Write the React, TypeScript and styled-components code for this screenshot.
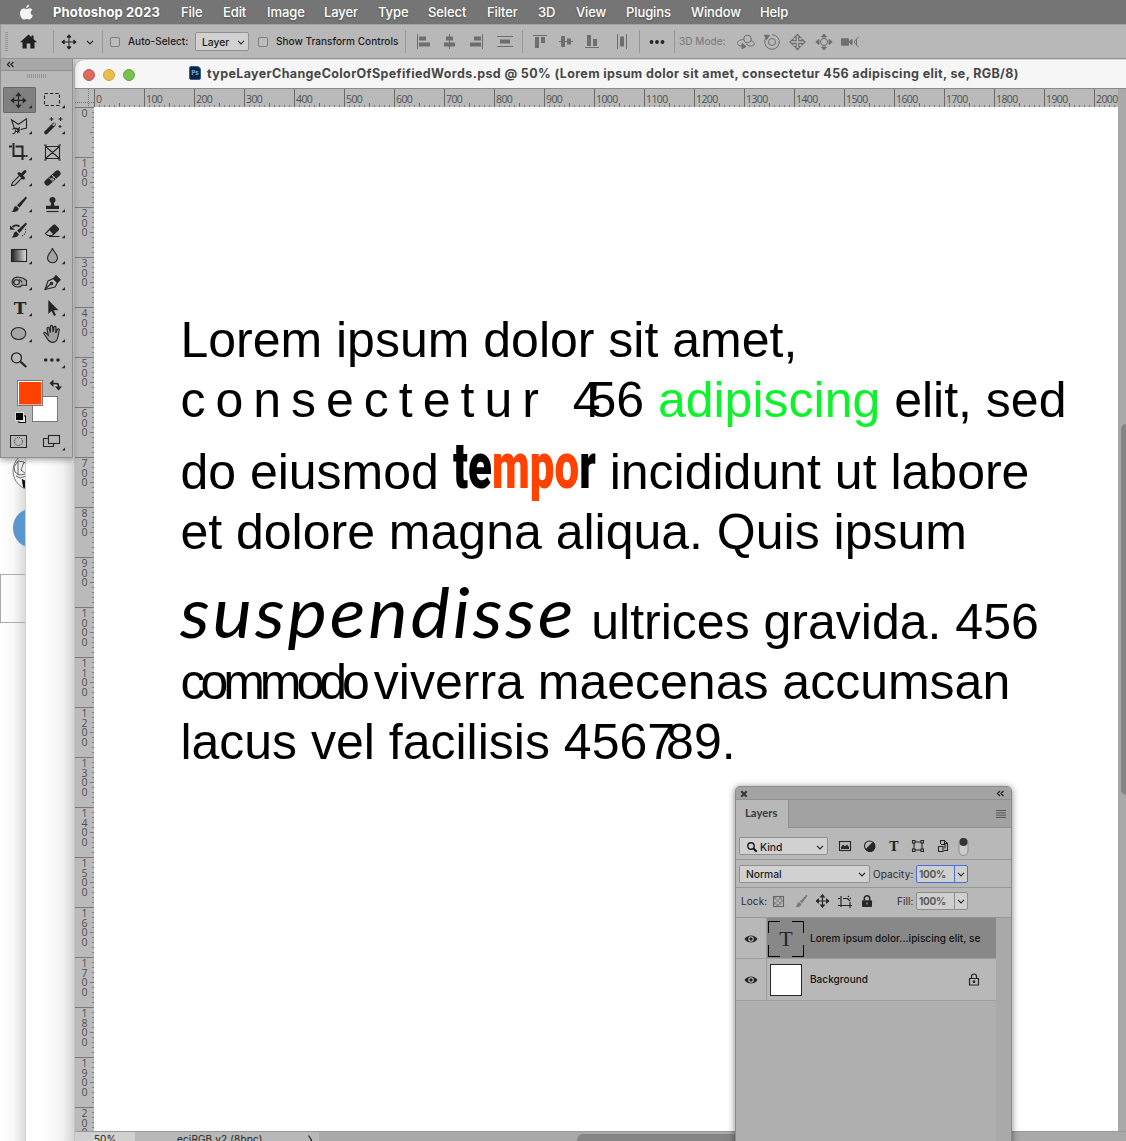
import React from "react";
import styled, { createGlobalStyle, css } from "styled-components";

const UI = `Inter, "Noto Sans", "Liberation Sans", sans-serif`;

const GlobalStyle = createGlobalStyle`
  * { box-sizing: border-box; }
  body { margin: 0; background: #fff; overflow: hidden; }
  svg { display: block; flex: none; }
`;

const Desktop = styled.div`
  width: 1126px;
  height: 1141px;
  display: flex;
  flex-direction: column;
  overflow: hidden;
  background: #fff;
  font-family: ${UI};
  color: #262626;
`;

/* ---------- menu bar ---------- */
const MenuBar = styled.nav`
  flex: none;
  height: 24px;
  display: flex;
  align-items: center;
  padding-left: 19px;
  background: #757575;
  color: #fff;
`;
const AppleSlot = styled.div`
  width: 34px;
`;
const MenuItem = styled.div<{ $w: number; $strong?: boolean }>`
  width: ${(p) => p.$w}px;
  font-size: 13px;
  line-height: 16px;
  font-weight: ${(p) => (p.$strong ? 700 : 500)};
  letter-spacing: ${(p) => (p.$strong ? 0.13 : -0.1)}px;
  white-space: nowrap;
  text-shadow: 0 1px 2px rgba(0, 0, 0, 0.35);
`;

/* ---------- options bar ---------- */
const OptionsBar = styled.div`
  flex: none;
  height: 35px;
  display: flex;
  align-items: center;
  background: #b8b8b8;
  border-top: 1px solid #a2a2a2;
  border-bottom: 1px solid #939393;
  border-left: 1px solid #999;
`;
const Slot = styled.div<{ $w: number }>`
  flex: none;
  width: ${(p) => p.$w}px;
  display: flex;
  align-items: center;
`;
const Grip = styled.div`
  width: 3px;
  height: 20px;
  margin-left: 4px;
  background: repeating-linear-gradient(to bottom, #959595 0 1px, transparent 1px 2px);
`;
const Divider = styled.div`
  flex: none;
  width: 1px;
  height: 23px;
  background: #969696;
`;
const OptionText = styled.div<{ $w: number; $muted?: boolean }>`
  flex: none;
  width: ${(p) => p.$w}px;
  margin-top: -1px;
  font-size: 10px;
  line-height: 14px;
  font-weight: 450;
  letter-spacing: 0.03px;
  white-space: nowrap;
  color: ${(p) => (p.$muted ? "#7f7f7f" : "#1a1a1a")};
`;
const CheckBox = styled.span`
  width: 10px;
  height: 10px;
  border: 1px solid #7e7e7e;
  border-radius: 2px;
  background: #bdbdbd;
`;
const Select = styled.div<{ $w: number; $h: number }>`
  flex: none;
  width: ${(p) => p.$w}px;
  height: ${(p) => p.$h}px;
  display: flex;
  align-items: center;
  gap: 3px;
  justify-content: space-between;
  padding: 1px 3px 0 6px;
  border: 1px solid #909090;
  border-radius: 2px;
  background: #d1d1d1;
  font-size: 10.3px;
  font-weight: 450;
  color: #1a1a1a;
`;

/* ---------- work area ---------- */
const Workspace = styled.main`
  flex: 1;
  position: relative;
  overflow: hidden;
  background: linear-gradient(to right, #fff 0 40px, #f3f3f3 62px, #d2d2d2 75px);
`;
const BackPage = styled.div`
  position: absolute;
  left: 0;
  top: 390px;
  width: 26px;
  bottom: 0;
  overflow: hidden;
  background: linear-gradient(to right, #fff, #f8f8f8 55%, #dcdcdc);
  border-right: 1px solid #cfcfcf;
`;
const BackStack = styled.div`
  display: flex;
  flex-direction: column;
  width: 60px;
`;
const BlueDot = styled.div`
  width: 40px;
  height: 40px;
  margin: 17px 0 0 13px;
  border-radius: 50%;
  background: #5b97cf;
`;
const OutlineBox = styled.div`
  height: 49px;
  margin-top: 26px;
  border: 1px solid #aaa;
`;

/* ---------- document window ---------- */
const DocWindow = styled.section`
  position: absolute;
  left: 75px;
  top: 1px;
  right: 0;
  bottom: 0;
  display: flex;
  flex-direction: column;
  border-top-left-radius: 9px;
  overflow: hidden;
  background: #a9a9a9;
  box-shadow: -1px 0 0 #c2c2c2;
`;
const TitleBar = styled.header`
  flex: none;
  height: 28px;
  display: flex;
  align-items: center;
  padding-left: 8px;
  background: #f6f6f6;
`;
const Lights = styled.div`
  width: 106px;
  display: flex;
  gap: 8px;
  padding-top: 2px;
`;
const Light = styled.span<{ $c: string; $b: string }>`
  width: 12px;
  height: 12px;
  border-radius: 50%;
  background: ${(p) => p.$c};
  border: 1px solid ${(p) => p.$b};
`;
const PsBadge = styled.span`
  width: 12px;
  height: 14px;
  margin: -3px 6px 0 0;
  border-radius: 2px 4px 2px 2px;
  background: #0d2440;
  border: 1px solid #2d5f9c;
  color: #6db4ff;
  font-size: 6px;
  line-height: 11px;
  font-weight: 700;
  text-align: center;
`;
const DocTitle = styled.h1`
  margin: 0;
  font-size: 12.5px;
  line-height: 16px;
  font-weight: 700;
  letter-spacing: 0.374px;
  white-space: nowrap;
  color: #464646;
`;

const DocBody = styled.div`
  flex: 1;
  min-height: 0;
  display: grid;
  grid-template-columns: 19px 1024px 8px;
  grid-template-rows: 19px 1024px 1fr;
`;
const RulerCorner = styled.div`
  border-top: 1px solid #8a8a8a;
  background:
    repeating-linear-gradient(to right, #777 0 1px, transparent 1px 2px) 0 13px / 19px 1px no-repeat,
    repeating-linear-gradient(to bottom, #777 0 1px, transparent 1px 2px) 13px 0 / 1px 19px no-repeat,
    #bababa;
`;
const HRuler = styled.div`
  display: flex;
  overflow: hidden;
  border-top: 1px solid #8a8a8a;
  background: #bababa;
`;
const HSegment = styled.div`
  flex: none;
  width: 50px;
  height: 18px;
  padding: 3px 0 0 2px;
  font-family: "Open Sans", "Noto Sans", sans-serif;
  font-size: 10.5px;
  line-height: 14px;
  letter-spacing: -0.6px;
  color: #505050;
  background:
    linear-gradient(#6b6b6b, #6b6b6b) 0 0 / 1px 18px no-repeat,
    linear-gradient(#6b6b6b, #6b6b6b) 25px 14px / 1px 4px no-repeat,
    repeating-linear-gradient(to right, #777 0 1px, transparent 1px 5px) 0 16px / 50px 2px no-repeat;
`;
const VRuler = styled.div`
  display: flex;
  flex-direction: column;
  overflow: hidden;
  background: #bababa;
`;
const VSegment = styled.div`
  flex: none;
  width: 19px;
  height: 50px;
  display: flex;
  flex-direction: column;
  align-items: center;
  padding-top: 2px;
  font-family: "Open Sans", "Noto Sans", sans-serif;
  font-size: 10.5px;
  line-height: 9.6px;
  color: #505050;
  background:
    linear-gradient(#7a7a7a, #7a7a7a) 0 0 / 19px 1px no-repeat,
    linear-gradient(#7a7a7a, #7a7a7a) 15px 25px / 4px 1px no-repeat,
    repeating-linear-gradient(to bottom, #7a7a7a 0 1px, transparent 1px 5px) 17px 0 / 2px 50px no-repeat;
`;
const VScroll = styled.div`
  padding-top: 317px;
  background: #a9a9a9;
  overflow: hidden;
`;
const VThumb = styled.div`
  width: 10px;
  height: 371px;
  margin-left: 3px;
  border-radius: 5px;
  background: #858585;
`;
const HeaderFiller = styled.div`
  border-top: 1px solid #8a8a8a;
  background: #a9a9a9;
`;
const StatusBar = styled.footer`
  grid-column: 1 / 4;
  display: flex;
  overflow: hidden;
  border-top: 1px solid #999;
  background: #a9a9a9;
  font-size: 10px;
  line-height: 15px;
  color: #222;
`;
const ZoomField = styled.div`
  width: 60px;
  height: 20px;
  padding-left: 19px;
  background: #d0d0d0;
`;
const ProfileField = styled.div`
  width: 184px;
  height: 20px;
  display: flex;
  justify-content: space-between;
  padding: 0 6px 0 42px;
  letter-spacing: 0.15px;
  background: #b8b8b8;
`;
const HThumb = styled.div`
  width: 420px;
  height: 12px;
  margin: 2px 0 0 258px;
  border-radius: 6px;
  background: #858585;
`;

/* ---------- artwork text ---------- */
const Artboard = styled.article`
  background: #fff;
  padding: 203px 0 0 86.4px;
  font-family: "Liberation Sans", Arial, sans-serif;
  font-size: 50px;
  color: #000;
`;
const TextLine = styled.p<{ $h: number }>`
  margin: 0;
  height: ${(p) => p.$h}px;
  display: flex;
  align-items: flex-end;
  line-height: 60px;
  white-space: pre;
`;
const Tracked = styled.span<{ $ls: number }>`
  letter-spacing: ${(p) => p.$ls}px;
`;
const Green = styled.span`
  color: #0cf22b;
`;
const Condensed = styled.span`
  width: 143px;
  margin-bottom: 6px;
  font-family: Roboto, sans-serif;
  font-weight: 900;
  font-size: 65px;
  transform: scaleX(0.675);
  transform-origin: 0 0;
`;
const Orange = styled.span`
  color: #ff4200;
`;
const Script = styled.span`
  width: 397px;
  margin-bottom: 10px;
  font-family: Lato, sans-serif;
  font-style: italic;
  font-size: 69px;
  letter-spacing: 2.6px;
  transform: scaleX(1.08);
  transform-origin: 0 0;
`;

/* ---------- tools palette ---------- */
const Palette = styled.aside`
  position: absolute;
  left: 0;
  top: 0;
  width: 73px;
  height: 399px;
  display: flex;
  flex-direction: column;
  background: #b8b8b8;
  border: 1px solid #8f8f8f;
  border-top: 0;
  box-shadow: 0 2px 6px rgba(0, 0, 0, 0.35);
`;
const PaletteHead = styled.div`
  height: 12px;
  padding: 2px 0 0 5px;
  background: #a8a8a8;
  border-bottom: 1px solid #8f8f8f;
`;
const PaletteGrip = styled.div`
  width: 20px;
  height: 4px;
  margin: 3px 0 9px 26px;
  background: repeating-linear-gradient(to right, #959595 0 1px, transparent 1px 2px);
`;
const ToolGrid = styled.div`
  display: grid;
  grid-template-columns: 33px 33px;
  grid-auto-rows: 26px;
  padding-left: 2px;
`;
const ToolButton = styled.div<{ $on?: boolean }>`
  ${(p) =>
    p.$on &&
    css`
      background: #808080;
      box-shadow: inset 0 0 0 1px #686868;
      border-radius: 2px;
    `}
`;
const PaletteFoot = styled.div`
  height: 84px;
`;

/* ---------- layers panel ---------- */
const Panel = styled.aside`
  position: absolute;
  left: 735px;
  top: 727px;
  width: 277px;
  height: 430px;
  display: flex;
  flex-direction: column;
  border: 1px solid #8b8b8b;
  border-radius: 5px 5px 0 0;
  background: #b8b8b8;
  box-shadow: 0 1px 7px rgba(0, 0, 0, 0.5);
  overflow: hidden;
`;
const PanelHead = styled.div`
  flex: none;
  height: 13px;
  display: flex;
  align-items: center;
  justify-content: space-between;
  padding: 1px 6px 0 4px;
  background: #a3a3a3;
  border-bottom: 1px solid #8f8f8f;
`;
const TabRow = styled.div`
  flex: none;
  height: 28px;
  display: flex;
  justify-content: space-between;
  background: #a2a2a2;
`;
const Tab = styled.div`
  width: 53px;
  padding: 6px 0 0 9px;
  font-family: Lato, "Noto Sans", sans-serif;
  font-size: 11.3px;
  line-height: 14px;
  font-weight: 700;
  color: #3b3b3b;
  background: #b8b8b8;
  border-right: 1px solid #929292;
`;
const TabRest = styled.div`
  flex: 1;
  display: flex;
  justify-content: flex-end;
  align-items: center;
  padding-right: 5px;
  border-bottom: 1px solid #929292;
`;
const PanelRow = styled.div<{ $h: number; $top?: number; $bottom?: number }>`
  flex: none;
  height: ${(p) => p.$h}px;
  display: flex;
  align-items: center;
  padding: ${(p) => p.$top ?? 0}px 0 ${(p) => p.$bottom ?? 0}px 3px;
  border-bottom: 1px solid #979797;
`;
const PanelLabel = styled.div<{ $w: number }>`
  flex: none;
  width: ${(p) => p.$w}px;
  font-size: 10px;
  line-height: 14px;
  letter-spacing: 0.1px;
  color: #2c2c2c;
`;
const SearchLabel = styled.span`
  flex: 1;
  display: flex;
  align-items: center;
  gap: 2px;
`;
const NumberField = styled.div<{ $active?: boolean }>`
  width: 52px;
  height: 18px;
  display: flex;
  border: 1px solid ${(p) => (p.$active ? "#4a6ee0" : "#8d8d8d")};
  border-radius: 2px;
  background: #cfcfcf;
`;
const NumberText = styled.div`
  width: 37px;
  padding-left: 2px;
  font-size: 10px;
  line-height: 17px;
  font-weight: 700;
  letter-spacing: -0.3px;
  color: #5c5c5c;
`;
const NumberArrow = styled.div<{ $active?: boolean }>`
  flex: 1;
  display: flex;
  align-items: center;
  justify-content: center;
  border-left: 1px solid ${(p) => (p.$active ? "#4a6ee0" : "#8d8d8d")};
`;
const LayerArea = styled.div`
  flex: 1;
  display: flex;
  background: #afafaf;
`;
const LayerList = styled.div`
  width: 260px;
`;
const LayerScroll = styled.div`
  flex: 1;
  background: #a9a9a9;
`;
const LayerRow = styled.div<{ $h: number }>`
  height: ${(p) => p.$h}px;
  display: flex;
  background: #b8b8b8;
  border-bottom: 1px solid #9e9e9e;
`;
const EyeCell = styled.div`
  width: 31px;
  display: flex;
  align-items: center;
  justify-content: center;
  padding-top: 1px;
  border-right: 1px solid #9e9e9e;
`;
const LayerMain = styled.div<{ $on?: boolean }>`
  flex: 1;
  display: flex;
  align-items: center;
  padding: ${(p) => (p.$on ? 2 : 0)}px 0 0 1px;
  background: ${(p) => (p.$on ? "#888" : "#b8b8b8")};
`;
const LayerName = styled.div`
  flex: 1;
  margin-left: 6px;
  padding-bottom: 2px;
  font-size: 10px;
  line-height: 14px;
  font-weight: 450;
  letter-spacing: 0.05px;
  white-space: nowrap;
  color: #111;
`;
const PixelThumb = styled.div`
  width: 32px;
  height: 32px;
  margin: 0 2px;
  background: #fff;
  border: 1px solid #2a2a2a;
`;
const LockSlot = styled.div`
  width: 28px;
`;

/* ---------- drawings ---------- */
const INK = "#262626";

const Chevron = ({ w = 8, c = INK }: { w?: number; c?: string }) => (
  <svg width={w} height={w} viewBox="0 0 8 8">
    <path d="M1 2.8 4 5.8 7 2.8" fill="none" stroke={c} strokeWidth="1.2" />
  </svg>
);
const DoubleChevron = () => (
  <svg width="9" height="7" viewBox="0 0 9 7">
    <path d="M4 1 1.500 3.500 4 6M7.500 1 5 3.500 7.500 6" fill="none" stroke={INK} strokeWidth="1.300" />
  </svg>
);
const movePath =
  "M0-6V6M-6 0H6M-2-4.800 0-7.200 2-4.800ZM-2 4.800 0 7.200 2 4.800ZM-4.800-2-7.200 0-4.800 2ZM4.800-2 7.200 0 4.800 2Z";
const MoveGlyph = ({ s = 16 }: { s?: number }) => (
  <svg width={s} height={s} viewBox="-8 -8 16 16">
    <path d={movePath} fill={INK} stroke={INK} strokeWidth="1" />
  </svg>
);
const Apple = () => (
  <svg width="15" height="17" viewBox="0 0 15 17">
    <path
      fill="#f4f4f4"
      d="M10.100 .8c.1 1.700-1.400 3.200-2.900 3.200C7 2.400 8.500.9 10.100.8zM7.600 5.100c.7 0 1.600-.8 2.900-.8 1.300 0 2.300.7 2.900 1.500-2.500 1.500-2.100 4.800.5 5.800-.6 1.600-1.900 4-3.400 4-1 0-1.500-.6-2.800-.6-1.200 0-1.800.6-2.700.6C3.400 15.600 1 12.400 1 9.200c0-3.200 2-4.800 3.800-4.800 1.200 0 2.100.7 2.800.7z"
    />
  </svg>
);
const Home = () => (
  <svg width="17" height="15" viewBox="0 0 17 15">
    <path fill="#202020" d="M8.500.5 0 8.300h2.500V14.500h4.200V9.500h3.600v5h4.200V8.300H17L13.500 5V1.500h-2v1.700z" />
  </svg>
);

const GRAY = "#6e6e6e";
const aligns: { d: string; line: string; w: number }[] = [
  { w: 26, line: "M1.500 0V15", d: "M3 2.500h7v4H3zM3 8.500h11v4H3z" },
  { w: 27, line: "M7.500 0V15", d: "M4 2.500h7v4H4zM2 8.500h11v4H2z" },
  { w: 28, line: "M13.500 0V15", d: "M5 2.500h7v4H5zM1 8.500h11v4H1z" },
];
const Align = ({ w, line, d }: { w: number; line: string; d: string }) => (
  <Slot $w={w}>
    <svg width="16" height="15" viewBox="0 0 16 15">
      <path d={line} stroke={GRAY} strokeWidth="1" fill="none" />
      <path d={d} fill={GRAY} />
    </svg>
  </Slot>
);

const Mode = ({ w, children }: { w: number; children: React.ReactNode }) => (
  <Slot $w={w}>
    <svg width="20" height="18" viewBox="0 0 20 18" fill="none" stroke="#6f6f6f" strokeWidth="1">
      {children}
    </svg>
  </Slot>
);

const letterT = (x: number, y: number, size: number, slab = true) => (
  <text
    x={x}
    y={y}
    fontFamily={slab ? "DejaVu Serif, serif" : "Liberation Serif, serif"}
    fontWeight={slab ? 700 : 400}
    fontSize={size}
    textAnchor="middle"
    fill={INK}
    stroke="none"
  >
    T
  </text>
);

const tools: { icon: React.ReactNode; more?: boolean; on?: boolean }[] = [
  { on: true, more: true, icon: <path transform="translate(15.500 13.400)" d={movePath} fill={INK} /> },
  { more: true, icon: <rect x="8.500" y="6.500" width="15" height="12" strokeDasharray="3.400 2" /> },
  {
    more: true,
    icon: (
      <>
        <path d="M11.500 15.500 8.500 6.800 15.500 11.300 23.500 5.800V15l-6 1.500" />
        <path d="M9.500 16.500c1-1.500 5-1.500 6.500 0s-2 2.500-4 1.500M12.500 16.500c.5 2.500-1 4.500-3 4.200M13 15 16.500 19.500M14.500 20 16.500 14" />
      </>
    ),
  },
  {
    more: true,
    icon: (
      <>
        <path d="M10 19.500 18 11.500" strokeWidth="3.800" strokeLinecap="round" />
        <path d="M16.800 12.700 19 10.500" stroke="#b0b0b0" strokeWidth="1.800" />
        <path d="M15.500 4v4M13.500 6h4M24.500 4v4M22.500 6h4M24 12v3M22.500 13.500h3" strokeWidth="1.200" />
      </>
    ),
  },
  { more: true, icon: <path d="M6 7.500h3M10.500 4v13H22M12.500 7.500H19.500V21M22.500 17h2" strokeWidth="2" /> },
  { icon: <path d="M9.500 7.500h14v12h-14zM9.500 7.500l14 12M23.500 7.500l-14 12M8 6h2v2M25 6h-2v2M8 21h2v-2M25 21h-2v-2" /> },
  {
    more: true,
    icon: (
      <>
        <path d="M8.500 20.500l1-3 7.500-7.500 2.500 2.500-7.500 7.500z" />
        <path d="M16 8.500 20.500 13M18 10.500 22 6.500" strokeWidth="3" strokeLinecap="round" />
      </>
    ),
  },
  {
    more: true,
    icon: (
      <>
        <path d="M11.500 17.500 21.500 8.500" strokeWidth="6" strokeLinecap="round" />
        <path d="M13 12.500l5 5M16 10l5 5" stroke="#b8b8b8" strokeWidth=".9" />
        <path d="M15.500 14h.1M17.500 12h.1M17.200 14.500h.1" stroke="#b8b8b8" strokeWidth="1.500" strokeLinecap="square" />
      </>
    ),
  },
  {
    more: true,
    icon: (
      <path
        stroke="none"
        fill={INK}
        d="M22.800 5.500 24 7l-7.500 9.500-2.500-2.300zM13.200 15l2.600 2.400c-.3 3-4 4-7.300 3.400 2-.9 1.800-2.300 2.400-4 .4-1 1.300-1.700 2.300-1.800z"
      />
    ),
  },
  {
    more: true,
    icon: (
      <>
        <circle cx="16.500" cy="9" r="3" stroke="none" fill={INK} />
        <path stroke="none" fill={INK} d="M15.200 11h2.600l.5 3.700H23V18H10v-3.300h4.700z" />
        <path d="M10.500 20.500h12" strokeWidth="1.200" />
      </>
    ),
  },
  {
    more: true,
    icon: (
      <>
        <path
          stroke="none"
          fill={INK}
          d="M22.800 5.500 24 7l-7.500 9-2.500-2.300zM13.200 14.500l2.600 2.400c-.3 3-4 4-7.300 3.400 2-.9 1.800-2.300 2.400-4 .4-1 1.300-1.700 2.300-1.800z"
        />
        <path d="M16.500 9.500c-2-1.500-5-1.500-7 .5" strokeWidth="1.800" />
        <path d="M7 8.500v4.200h5z" fill={INK} stroke="none" />
        <path d="M22.500 12c1 3-1 6.500-4.500 7.500" strokeDasharray="1 1.500" />
      </>
    ),
  },
  {
    more: true,
    icon: (
      <>
        <path d="M9.500 16.500 17.500 8.500c.6-.6 1-.6 1.600 0l3 3c.5.500.5 1 0 1.500L16 18.500h-4.500z" />
        <path d="M13.500 12.500 17.800 8.500c.4-.4.800-.4 1.200 0l3 3c.4.400.4.900 0 1.300L17.700 17z" fill={INK} />
        <path d="M13 19.500h10.500" />
      </>
    ),
  },
  {
    more: true,
    icon: <rect x="8.500" y="6.500" width="15" height="12" fill="url(#toolRamp)" />,
  },
  { more: true, icon: <path d="M16.500 5c.5 3.500 5 6 5 10a5 4.700 0 0 1-10 0c0-4 4.500-6.500 5-10z" fill="#a2a2a2" /> },
  {
    more: true,
    icon: (
      <>
        <path d="M23.500 11.500c-2-2-4.500-3-7.500-3.300-4-.5-7 1.800-7 4.800s2.500 5 6 5c2 0 3.500-.5 4-2l4.500.5z" fill="#a8a8a8" />
        <ellipse cx="13.500" cy="13.300" rx="2.800" ry="2.500" fill="#b8b8b8" />
        <path d="M9.500 13.300h2M16 10.500c1.500.5 2.500 1.500 3 3" />
      </>
    ),
  },
  {
    more: true,
    icon: (
      <>
        <path d="M9 20.500 12 12l5.500-2.500 4 4L19 18z" />
        <path d="M17.500 9.500 20 6.500l4.200 4.200-2.700 2.800z" fill={INK} />
        <path d="M9 20.500l5.500-5.500" />
        <circle cx="15.500" cy="14.500" r="1.200" fill={INK} />
      </>
    ),
  },
  { more: true, icon: letterT(17, 19.3, 17) },
  {
    more: true,
    icon: <path d="M12.300 5v14l3.300-3 2.400 5 2-1-2.400-4.800h4.800z" fill={INK} stroke="none" />,
  },
  { more: true, icon: <ellipse cx="15.500" cy="12.500" rx="7.300" ry="6" fill="#a6a6a6" /> },
  {
    more: true,
    icon: (
      <path
        transform="translate(0 -1)"
        d="M12.500 20.500C11 18.500 9.500 15.500 8 13.800c-.7-1.300.8-2 1.800-1l2.500 2.500-1.300-6.800c0-1.500 1.700-1.700 2.100-.3l1.300 4.300V6.500c0-1.400 2-1.400 2.200 0l.4 5.700.9-5c.3-1.300 2.200-1.200 2.100.3l-.3 5.500 1.600-3.500c.7-1.200 2.200-.6 1.900.7-.9 3.500-.8 9.300-3.700 11.300-2 1-5.200.8-7-1z"
        fill="#a2a2a2"
        strokeWidth="1.200"
      />
    ),
  },
  {
    icon: (
      <>
        <circle cx="13.500" cy="10.800" r="5" strokeWidth="1.300" />
        <path d="M17.300 14.500 23.300 20" strokeWidth="2.200" />
      </>
    ),
  },
  { more: true, icon: <path d="M9.700 13h0M15.900 13h0M22 13h0" strokeWidth="3.600" strokeLinecap="round" /> },
];

const ToolIcon = ({ children, more }: { children: React.ReactNode; more?: boolean }) => (
  <svg width="33" height="26" viewBox="0 0 33 26" fill="none" stroke={INK} strokeWidth="1.100">
    <defs>
      <linearGradient id="toolRamp">
        <stop offset="0" stopColor="#1d1d1d" />
        <stop offset="1" stopColor="#e2e2e2" />
      </linearGradient>
    </defs>
    {children}
    {more && <path d="M25.700 21.300H29V18z" fill={INK} stroke="none" />}
  </svg>
);

const Swatches = () => (
  <svg width="71" height="84" viewBox="1 373 71 84">
    <rect x="32.500" y="396.500" width="25" height="25" fill="#fff" stroke="#777" />
    <rect x="17.500" y="380.500" width="25" height="25" fill="#fff" stroke="#777" />
    <rect x="19" y="382" width="22.500" height="22.500" fill="#ff4200" />
    <path d="M53 383.500h3.500q2 0 2 2.500v1" fill="none" stroke={INK} strokeWidth="1.700" />
    <path d="M53.500 379.500v7.500l-4-3.700zM55 386.500h7l-3.500 4z" fill={INK} />
    <rect x="19" y="416" width="6.500" height="6.500" fill="#fff" stroke="#000" />
    <rect x="15.500" y="412.500" width="8" height="8" fill="#000" stroke="#ddd" />
    <rect x="10.500" y="435.500" width="16" height="12" fill="none" stroke={INK} />
    <circle cx="18.500" cy="441.500" r="4" fill="none" stroke={INK} strokeDasharray="1 1.100" />
    <path d="M48.500 438.500h-5v8h10v-3" fill="none" stroke={INK} strokeWidth="1.100" />
    <rect x="48.500" y="435.500" width="11" height="8" fill="none" stroke={INK} strokeWidth="1.100" />
    <path d="M62 450.500h3V447.500z" fill={INK} />
  </svg>
);

const PanelGlyph = ({ w, children }: { w: number; children: React.ReactNode }) => (
  <Slot $w={w}>
    <svg width="14" height="14" viewBox="0 0 14 14" fill="none" stroke={INK} strokeWidth="1.100">
      {children}
    </svg>
  </Slot>
);

const Eye = () => (
  <svg width="14" height="10" viewBox="0 0 14 10">
    <path d="M.5 5C3.300.3 10.700.3 13.500 5 10.700 9.700 3.300 9.700.5 5z" fill={INK} />
    <circle cx="7" cy="5" r="2.700" fill="#c4c4c4" />
    <circle cx="7" cy="5" r="1.700" fill={INK} />
  </svg>
);

const menu: [string, number][] = [
  ["File", 42],
  ["Edit", 44],
  ["Image", 57],
  ["Layer", 54],
  ["Type", 50],
  ["Select", 59],
  ["Filter", 51],
  ["3D", 38],
  ["View", 50],
  ["Plugins", 65],
  ["Window", 69],
  ["Help", 40],
];

const steps = Array.from({ length: 21 }, (_, i) => i * 100);

export default function App() {
  return (
    <>
      <GlobalStyle />
      <Desktop>
        <MenuBar>
          <AppleSlot>
            <Apple />
          </AppleSlot>
          <MenuItem $w={128} $strong>
            Photoshop 2023
          </MenuItem>
          {menu.map(([label, w]) => (
            <MenuItem key={label} $w={w}>
              {label}
            </MenuItem>
          ))}
        </MenuBar>

        <OptionsBar>
          <Slot $w={19}>
            <Grip />
          </Slot>
          <Slot $w={33}>
            <Home />
          </Slot>
          <Divider />
          <Slot $w={32}>
            <Slot $w={7} />
            <MoveGlyph />
          </Slot>
          <Slot $w={16}>
            <Chevron />
          </Slot>
          <Divider />
          <Slot $w={25}>
            <Slot $w={7} />
            <CheckBox />
          </Slot>
          <OptionText $w={67}>Auto-Select:</OptionText>
          <Select $w={54} $h={19}>
            Layer
            <Chevron />
          </Select>
          <Slot $w={27}>
            <Slot $w={9} />
            <CheckBox />
          </Slot>
          <OptionText $w={129}>Show Transform Controls</OptionText>
          <Divider />
          <Slot $w={10} />
          {aligns.map((a) => (
            <Align key={a.line} {...a} />
          ))}
          <Align w={25} line="M0 2.500H16M0 12.500H16" d="M3 5.500h10v4H3z" />
          <Divider />
          <Slot $w={10} />
          <Align w={26} line="M0 1.500H14" d="M2 3h4v11H2zM8 3h4v6H8z" />
          <Align w={26} line="M0 7.500H14" d="M2 2h4v11H2zM8 4.500h4v6H8z" />
          <Align w={32} line="M0 13.500H14" d="M2 1h4v11H2zM8 5h4v7H8z" />
          <Align w={22} line="M.500 0V15M9.500 0V15" d="M3 2.500h4v10H3z" />
          <Divider />
          <Slot $w={34}>
            <svg width="34" height="6" viewBox="0 0 34 6">
              <path d="M11.500 3h0M17 3h0M22.500 3h0" stroke={INK} strokeWidth="3.800" strokeLinecap="round" />
            </svg>
          </Slot>
          <Divider />
          <Slot $w={4} />
          <OptionText $w={58} $muted>
            3D Mode:
          </OptionText>
          <Mode w={26}>
            <circle cx="10.500" cy="6" r="3.800" />
            <path d="M6.500 6.500C2 6.800-1 9 .8 11.500c1.200 1.300 3.200 1.800 5.200 1.500M14 7.500c5 2 4.500 6-1.500 5.500l-3.500-2" />
            <path d="M5 10.500 9 13.500l-4 2.300z" fill="#6f6f6f" />
          </Mode>
          <Mode w={26}>
            <circle cx="9" cy="9" r="3.500" />
            <path d="M3.500 4.200A7.300 7.300 0 1 0 9 1.700" />
            <path d="M1.500 2l5 .5L3.500 6.500z" fill="#6f6f6f" />
          </Mode>
          <Mode w={26}>
            <path
              strokeWidth="1.200"
              d="M8.500 1.500l2.800 3H9.800v3.200h3.200V6.200l3 2.800-3 2.800v-1.500H9.800v3.200h1.500l-2.800 3-2.800-3h1.500v-3.200H4v1.500L1 9l3-2.800v1.500h3.200V4.500H5.700z"
            />
          </Mode>
          <Mode w={26}>
            <circle cx="9" cy="9" r="3.500" />
            <path
              d="M9 1l2.500 3h-5zM9 17l2.500-3h-5zM.8 9l3.200-2.500v5zM17.200 9l-3.200-2.500v5z"
              fill="#6f6f6f"
            />
          </Mode>
          <Mode w={24}>
            <path d="M.5 5.800h7v6.400h-7zM8 9l3-2.800v5.600z" fill="#6f6f6f" />
            <path d="M17.500 3.800 13 9l4.500 5.200M15.500 6v6" />
          </Mode>
        </OptionsBar>

        <Workspace>
          <BackPage>
            <BackStack>
              <svg width="60" height="42" viewBox="0 0 60 42">
                <circle cx="32" cy="22" r="19" fill="#f2f2f2" stroke="#777" />
                <path
                  d="M14 18l4-6 6 1 4 5-2 7-7 1-4-3zM18 12v14M24 13l-3 8 5 4M16 27l4 2 6-2M22 30l2 9"
                  fill="none"
                  stroke="#666"
                />
                <path d="M22 30l4 2v8l-3-2z" fill="#111" />
              </svg>
              <BlueDot />
              <OutlineBox />
            </BackStack>
          </BackPage>

          <DocWindow>
            <TitleBar>
              <Lights>
                <Light $c="#dc6a5e" $b="#c2584c" />
                <Light $c="#ecbc4d" $b="#cfa03a" />
                <Light $c="#78c150" $b="#61a63c" />
              </Lights>
              <PsBadge>Ps</PsBadge>
              <DocTitle>
                typeLayerChangeColorOfSpefifiedWords.psd @ 50% (Lorem ipsum dolor sit amet, consectetur 456
                adipiscing elit, se, RGB/8)
              </DocTitle>
            </TitleBar>
            <DocBody>
              <RulerCorner />
              <HRuler>
                {steps.map((n) => (
                  <HSegment key={n}>{n}</HSegment>
                ))}
              </HRuler>
              <HeaderFiller />
              <VRuler>
                {steps.map((n) => (
                  <VSegment key={n}>
                    {String(n)
                      .split("")
                      .map((digit, i) => (
                        <span key={i}>{digit}</span>
                      ))}
                  </VSegment>
                ))}
              </VRuler>
              <Artboard>
                <TextLine $h={60}>Lorem ipsum dolor sit amet,</TextLine>
                <TextLine $h={60}>
                  <Tracked $ls={10}>consectetur </Tracked>
                  <Tracked $ls={-12.2}>4</Tracked>
                  <span>56 </span>
                  <Green>adipiscing</Green>
                  <span> elit, sed</span>
                </TextLine>
                <TextLine $h={72}>
                  <span>do eiusmod </span>
                  <Condensed>
                    te<Orange>mpo</Orange>r
                  </Condensed>
                  <span> incididunt ut labore</span>
                </TextLine>
                <TextLine $h={60}>et dolore magna aliqua. Quis ipsum</TextLine>
                <TextLine $h={90}>
                  <Script>suspendisse</Script>
                  <span> ultrices gravida. 456</span>
                </TextLine>
                <TextLine $h={60}>
                  <Tracked $ls={-5}>commodo </Tracked>
                  <span>viverra maecenas accumsan</span>
                </TextLine>
                <TextLine $h={60}>
                  <span>lacus vel facilisis 456</span>
                  <Tracked $ls={-9}>7</Tracked>
                  <span>89.</span>
                </TextLine>
              </Artboard>
              <VScroll>
                <VThumb />
              </VScroll>
              <StatusBar>
                <ZoomField>50%</ZoomField>
                <ProfileField>
                  <span>eciRGB v2 (8bpc)</span>
                  <svg width="5" height="14" viewBox="0 0 5 14">
                    <path d="M.5 3.500 3.500 8 .5 12" fill="none" stroke={INK} strokeWidth="1.200" />
                  </svg>
                </ProfileField>
                <HThumb />
              </StatusBar>
            </DocBody>
          </DocWindow>

          <Palette>
            <PaletteHead>
              <DoubleChevron />
            </PaletteHead>
            <PaletteGrip />
            <ToolGrid>
              {tools.map((t, i) => (
                <ToolButton key={i} $on={t.on}>
                  <ToolIcon more={t.more}>{t.icon}</ToolIcon>
                </ToolButton>
              ))}
            </ToolGrid>
            <PaletteFoot>
              <Swatches />
            </PaletteFoot>
          </Palette>

          <Panel>
            <PanelHead>
              <svg width="8" height="8" viewBox="0 0 8 8">
                <path d="M1.300 1.300l5.400 5.400M6.700 1.300 1.300 6.700" stroke="#333" strokeWidth="2" />
              </svg>
              <DoubleChevron />
            </PanelHead>
            <TabRow>
              <Tab>Layers</Tab>
              <TabRest>
                <svg width="10" height="8" viewBox="0 0 10 8">
                  <path d="M0 .5h10M0 2.800h10M0 5.100h10M0 7.400h10" stroke="#555" />
                </svg>
              </TabRest>
            </TabRow>
            <PanelRow $h={32} $top={5}>
              <Select $w={89} $h={18}>
                <SearchLabel>
                  <svg width="12" height="12" viewBox="0 0 12 12">
                    <circle cx="5" cy="5" r="3.200" fill="none" stroke="#1c1c1c" strokeWidth="1.400" />
                    <path d="M7.300 7.300 10.700 10.700" stroke="#1c1c1c" strokeWidth="2.200" />
                  </svg>
                  Kind
                </SearchLabel>
                <Chevron />
              </Select>
              <Slot $w={10} />
              <PanelGlyph w={25}>
                <rect x="1.500" y="2.500" width="11" height="9" />
                <path d="M3 10V8l2.200-2.500L7 7.500l2-2 2 2.500v2z" fill={INK} stroke="none" />
              </PanelGlyph>
              <PanelGlyph w={24}>
                <circle cx="6.500" cy="7" r="5" />
                <path d="M10 3.500A5 5 0 1 1 3 10.500z" fill={INK} />
              </PanelGlyph>
              <PanelGlyph w={24}>{letterT(7, 11.500, 12.500)}</PanelGlyph>
              <PanelGlyph w={25}>
                <path d="M3 3h8v8H3z" />
                <path d="M1.500 1.500h2.500v2.500H1.500zM10 1.500h2.500v2.500H10zM1.500 10h2.500v2.500H1.500zM10 10h2.500v2.500H10z" fill="#b8b8b8" />
              </PanelGlyph>
              <PanelGlyph w={22}>
                <path d="M4.500 5V1.500H8.500L11.500 4.500V11.500H8M8.500 1.500v3h3" />
                <path d="M2.500 7.500h4.500v5H2.500zM5 5.500h4v4" />
              </PanelGlyph>
              <svg width="11" height="19" viewBox="0 0 11 19">
                <rect x="1" y="1.500" width="9" height="17" rx="4.500" fill="#ccc" stroke="#8c8c8c" />
                <circle cx="5.500" cy="5" r="4" fill="#333" />
              </svg>
            </PanelRow>
            <PanelRow $h={28}>
              <Select $w={131} $h={18}>
                Normal
                <Chevron />
              </Select>
              <Slot $w={3} />
              <PanelLabel $w={43}>Opacity:</PanelLabel>
              <NumberField $active>
                <NumberText>100%</NumberText>
                <NumberArrow $active>
                  <Chevron />
                </NumberArrow>
              </NumberField>
            </PanelRow>
            <PanelRow $h={30} $bottom={3}>
              <Slot $w={2} />
              <PanelLabel $w={30}>Lock:</PanelLabel>
              <PanelGlyph w={23}>
                <rect x="2.500" y="2.500" width="10" height="10" stroke="#666" />
                <path
                  d="M3 3h2.500v2.500H3zM8 3h2.500v2.500H8zM5.500 5.500H8V8H5.500zM10 5.500h2V8h-2zM3 8h2.500v2.500H3zM8 8h2.500v2.500H8zM5.500 10H8v2H5.500z"
                  fill="#888"
                  stroke="none"
                />
              </PanelGlyph>
              <PanelGlyph w={22}>
                <path
                  d="M12.500.8l1 1L8 9.300 6 7.500zM5.500 8.200l2 1.800c-.3 2.500-3.300 3.500-6 3 1.500-.8 1.300-1.800 1.800-3.200.4-.9 1.200-1.500 2.200-1.600z"
                  fill="#777"
                  stroke="none"
                />
              </PanelGlyph>
              <PanelGlyph w={22}>
                <path transform="translate(6.500 7) scale(.86)" d={movePath} fill={INK} strokeWidth="1.300" />
              </PanelGlyph>
              <PanelGlyph w={22}>
                <path d="M0 4.500h2M3 2v11M0 11.500h14M12 8v6M5 4.500h4.500l2.500 2.500" strokeWidth="1.200" />
                <path d="M10 2l3 3" strokeDasharray="1.500 1" />
              </PanelGlyph>
              <PanelGlyph w={37}>
                <rect x="2" y="6.200" width="10" height="6.800" rx="1" fill={INK} stroke="none" />
                <path d="M4.300 6.500V4.500a2.700 2.700 0 0 1 5.400 0v2" strokeWidth="1.500" />
                <rect x="6.400" y="8.500" width="1.200" height="2" fill="#aaa" stroke="none" />
              </PanelGlyph>
              <PanelLabel $w={19}>Fill:</PanelLabel>
              <NumberField>
                <NumberText>100%</NumberText>
                <NumberArrow>
                  <Chevron />
                </NumberArrow>
              </NumberField>
            </PanelRow>
            <LayerArea>
              <LayerList>
                <LayerRow $h={41}>
                  <EyeCell>
                    <Eye />
                  </EyeCell>
                  <LayerMain $on>
                    <svg width="36" height="36" viewBox="0 0 36 36">
                      <path
                        d="M.5 12V.5H12M24 .5h11.500V12M35.500 24v11.500H24M12 35.500H.5V24"
                        fill="none"
                        stroke="#000"
                      />
                      {letterT(18, 25.3, 22, false)}
                    </svg>
                    <LayerName>Lorem ipsum dolor...ipiscing elit, se</LayerName>
                  </LayerMain>
                </LayerRow>
                <LayerRow $h={42}>
                  <EyeCell>
                    <Eye />
                  </EyeCell>
                  <LayerMain>
                    <PixelThumb />
                    <LayerName>Background</LayerName>
                    <LockSlot>
                      <svg width="12" height="13" viewBox="0 0 12 13" fill="none" stroke={INK} strokeWidth="1.200">
                        <path d="M1.500 5.500h9v6.500h-9zM3.500 5.500V3.500a2.500 2.500 0 0 1 5 0v2" />
                        <circle cx="6" cy="8.700" r=".8" fill={INK} />
                      </svg>
                    </LockSlot>
                  </LayerMain>
                </LayerRow>
              </LayerList>
              <LayerScroll />
            </LayerArea>
          </Panel>
        </Workspace>
      </Desktop>
    </>
  );
}
